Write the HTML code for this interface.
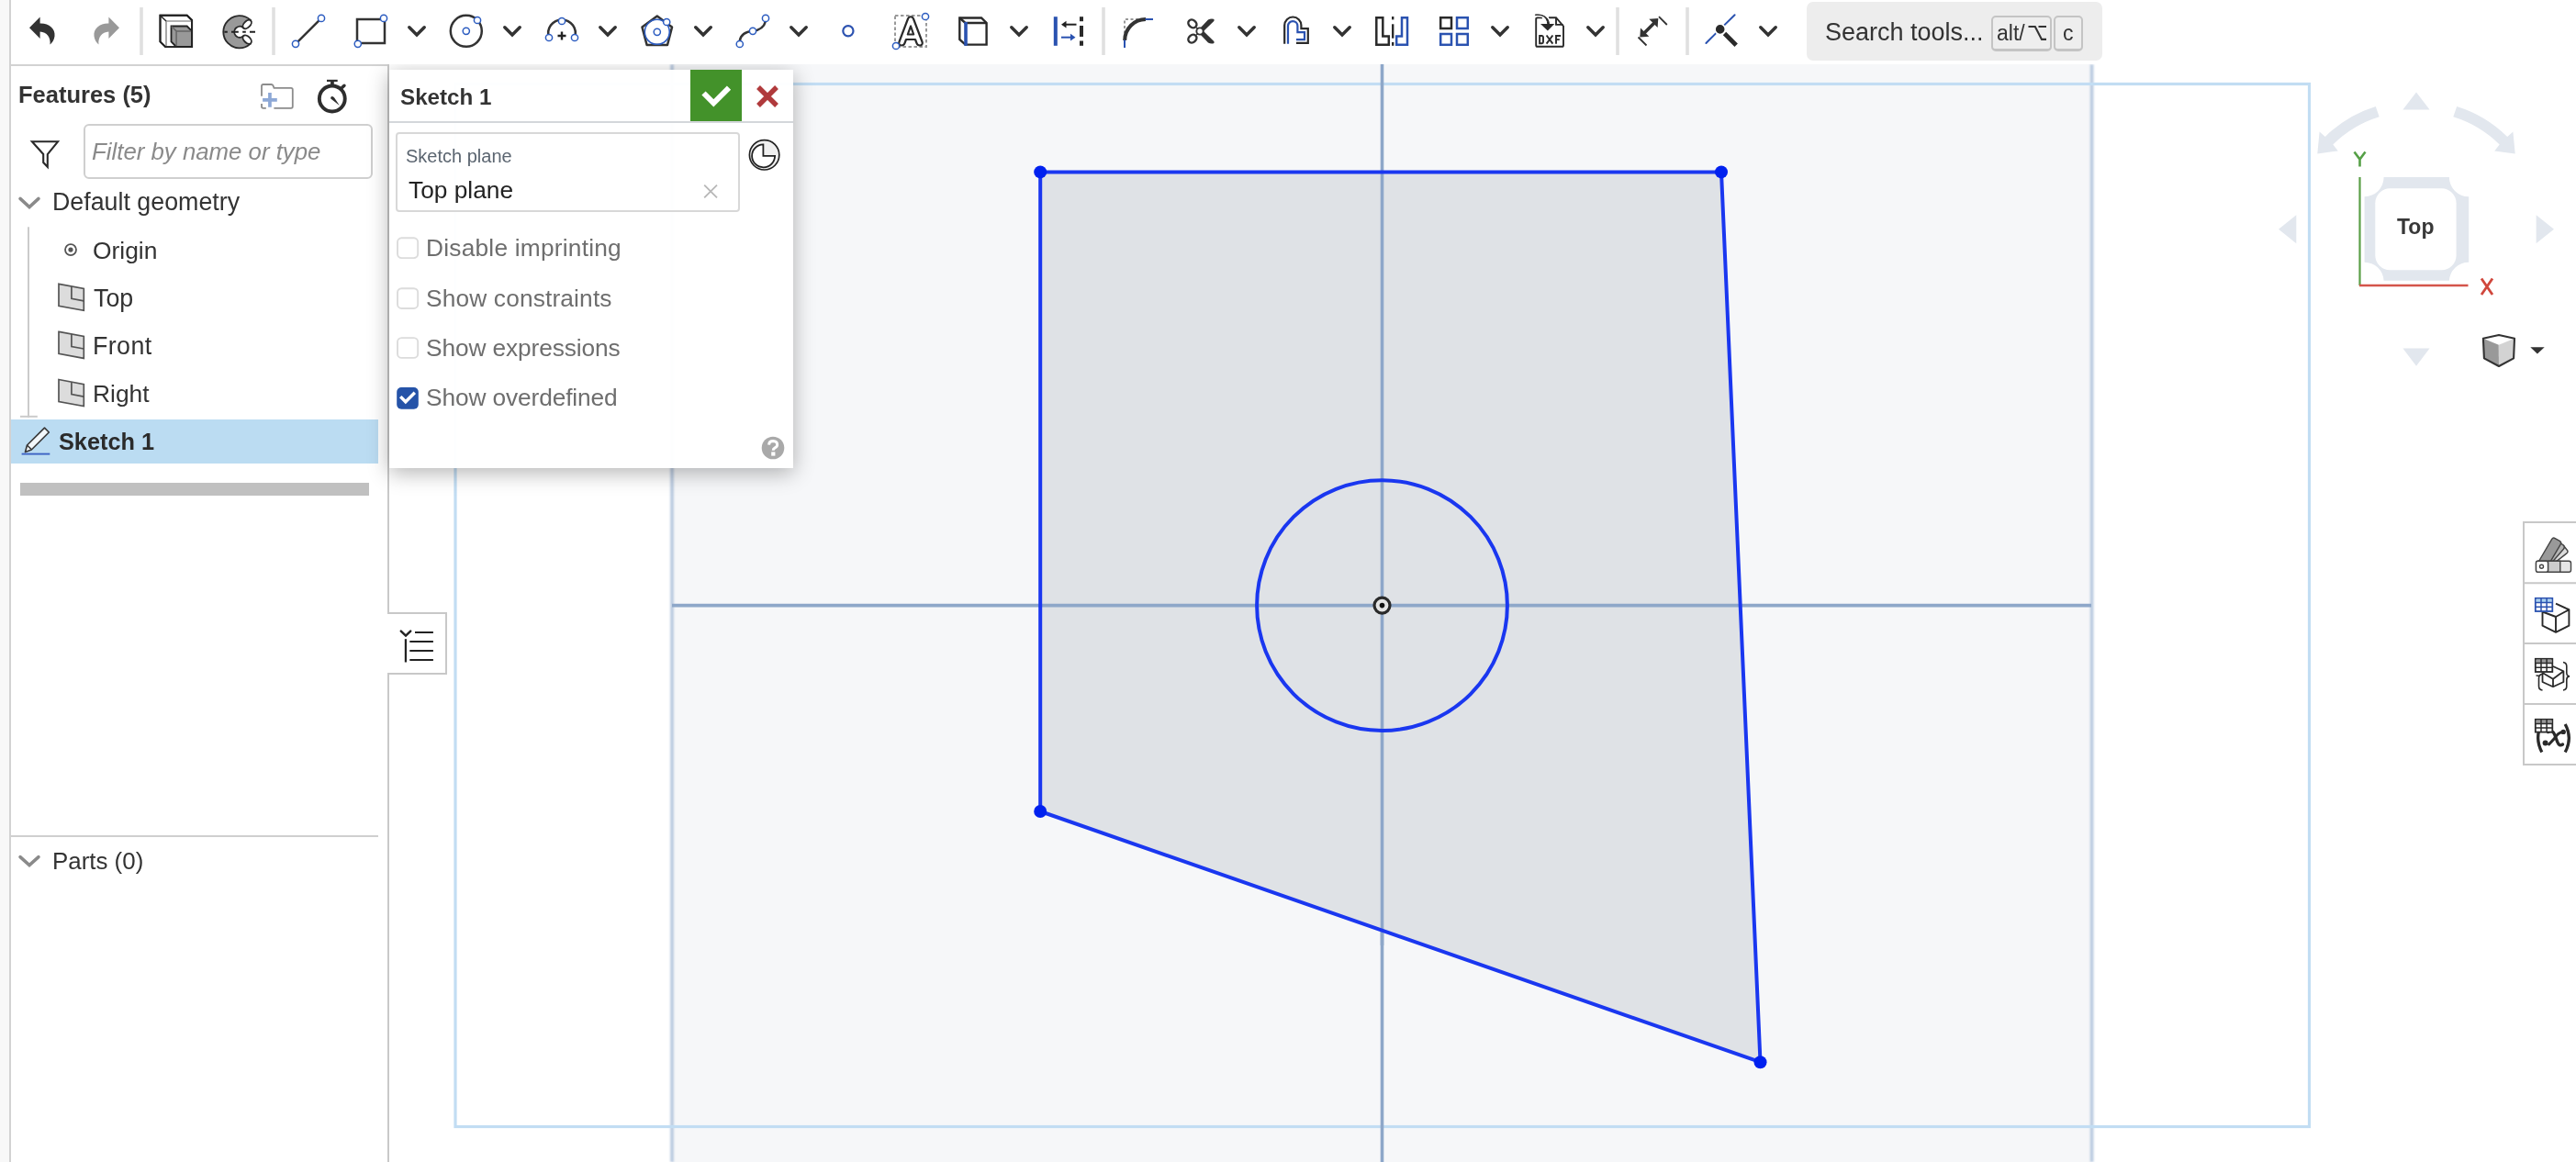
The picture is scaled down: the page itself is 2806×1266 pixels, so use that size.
<!DOCTYPE html>
<html><head><meta charset="utf-8">
<style>
html,body{margin:0;padding:0}
body{width:2806px;height:1266px;overflow:hidden;position:relative;background:#fff;font-family:"Liberation Sans",sans-serif;color:#333}
.a{position:absolute}
.t{position:absolute;line-height:1;white-space:nowrap;will-change:transform}
svg{position:absolute;overflow:visible}
</style></head><body>

<!-- VIEWPORT -->
<svg class="a" style="left:0;top:0" width="2806" height="1266" viewBox="0 0 2806 1266">
  <defs><filter id="bl" filterUnits="userSpaceOnUse" x="0" y="0" width="2806" height="1266"><feGaussianBlur stdDeviation="0.8"/></filter><filter id="bl2" filterUnits="userSpaceOnUse" x="0" y="0" width="2806" height="1266"><feGaussianBlur stdDeviation="0.45"/></filter></defs>
  <rect x="732" y="70" width="1546" height="1196" fill="#f6f7f9"/>
  <line x1="732" y1="70" x2="732" y2="1266" stroke="#b8c9df" stroke-width="3.6" filter="url(#bl)"/>
  <line x1="2278.6" y1="70" x2="2278.6" y2="1266" stroke="#b8c9df" stroke-width="3.6" filter="url(#bl)"/>
  <rect x="496" y="91.5" width="2019.5" height="1136" fill="none" stroke="#c2ddf3" stroke-width="3.2" filter="url(#bl2)"/>
  <line x1="1505.5" y1="70" x2="1505.5" y2="1266" stroke="#8ea7c9" stroke-width="3.6" filter="url(#bl2)"/>
  <line x1="732" y1="659.6" x2="2278" y2="659.6" stroke="#8ea7c9" stroke-width="3.6" filter="url(#bl2)"/>
  <polygon points="1133.2,187.4 1875,187.4 1917.5,1157.2 1133.2,884" fill="#dfe2e6" stroke="none"/>
  <line x1="1505.5" y1="187" x2="1505.5" y2="1030" stroke="#8ea7c9" stroke-width="3.6" filter="url(#bl2)"/>
  <line x1="1133" y1="659.6" x2="1895" y2="659.6" stroke="#8ea7c9" stroke-width="3.6" filter="url(#bl2)"/>
  <polygon points="1133.2,187.4 1875,187.4 1917.5,1157.2 1133.2,884" fill="none" stroke="#1a37f0" stroke-width="4"/>
  <circle cx="1505.5" cy="659.6" r="136.4" fill="none" stroke="#1a37f0" stroke-width="4"/>
  <g fill="#0021ef">
    <circle cx="1133.2" cy="187.4" r="7"/><circle cx="1875" cy="187.4" r="7"/>
    <circle cx="1917.5" cy="1157.2" r="7"/><circle cx="1133.2" cy="884" r="7"/>
  </g>
  <circle cx="1505.5" cy="659.6" r="8.5" fill="#e4e4e4" stroke="#2a2a2a" stroke-width="3.2"/>
  <circle cx="1505.5" cy="659.6" r="2.8" fill="#111"/>
</svg>

<!-- left strip -->
<div class="a" style="left:0;top:0;width:10px;height:1266px;background:#f8f8f8"></div>
<div class="a" style="left:10px;top:0;width:2px;height:1266px;background:#d2d2d2"></div>

<!-- FEATURES PANEL -->
<div class="a" style="left:10px;top:70px;width:414px;height:2px;background:#d2d2d2"></div>
<div class="a" style="left:12px;top:72px;width:410px;height:1194px;background:#fff"></div>
<div class="a" style="left:422px;top:70px;width:2px;height:1196px;background:#c9c9c9"></div>
<div id="panel"></div>
<!-- panel icons -->
<svg class="a" style="left:0;top:0" width="430" height="1266">
 <!-- folder plus -->
 <path d="M285,104.7 V93.8 Q285,92 286.8,92 H295.5 Q296.8,92 297.5,93.3 L298.5,95.9 H317 Q318.8,95.9 318.8,97.7 V116.1 Q318.8,117.9 317,117.9 H298.4 M289.8,117.9 H286.8 Q285,117.9 285,116.1 V113.1" fill="none" stroke="#8c8c8c" stroke-width="1.8"/>
 <path d="M293.95,101.1 V116.8 M286.1,108.95 H301.8" stroke="#8da8d6" stroke-width="3.7"/>
 <!-- stopwatch -->
 <circle cx="361.8" cy="107.5" r="13.95" fill="none" stroke="#2e2e2e" stroke-width="3.9"/>
 <path d="M356,87.9 H367.7" stroke="#2e2e2e" stroke-width="2.2"/>
 <rect x="360.1" y="88.5" width="3.7" height="5" fill="#2e2e2e"/>
 <path d="M372.5,95.6 L375,93.2" stroke="#2e2e2e" stroke-width="3.4" stroke-linecap="round"/>
 <path d="M360.3,107.6 Q359.8,105 361.9,104.9 Q363.2,105 364.2,106.6 L369.9,115 Z" fill="#2e2e2e"/>
 <!-- funnel -->
 <path d="M34.9,154.3 H63 L51.8,168 V181.8 L47.2,177 V168 Z" fill="none" stroke="#2a2a2a" stroke-width="2.1" stroke-linejoin="miter"/>
 <!-- default geometry chevron -->
 <polyline points="22,216.4 32,225.6 42,216.4" fill="none" stroke="#8a8a8a" stroke-width="3.5" stroke-linecap="round"/>
 <!-- tree line -->
 <rect x="30" y="247.3" width="2" height="207.5" fill="#cbcbcb"/>
 <rect x="22" y="452.8" width="18.8" height="2" fill="#cbcbcb"/>
 <!-- origin -->
 <circle cx="77" cy="272.1" r="6" fill="none" stroke="#555" stroke-width="1.8"/>
 <circle cx="77" cy="272.1" r="2.6" fill="#555"/>
 <!-- planes -->
 <g id="plane"><path d="M64,309.3 L91.3,314.4 V338.3 L64,333.3 Z" fill="#dcdcdc" stroke="#555" stroke-width="1.7"/><path d="M77.9,312 V325.4 L91.3,327.9" fill="none" stroke="#555" stroke-width="1.7"/></g>
 <use href="#plane" x="0" y="52.1"/>
 <use href="#plane" x="0" y="104.2"/>
</svg>
<!-- filter input -->
<div class="a" style="left:90.5px;top:135.2px;width:311.2px;height:55.5px;border:2px solid #cfcfcf;border-radius:6px;background:#fff"></div>
<div class="t" style="left:100px;top:152.8px;font-size:25.8px;font-style:italic;color:#8a8a8a">Filter by name or type</div>
<div class="t" style="left:20px;top:90.8px;font-size:25.5px;font-weight:bold;color:#333">Features (5)</div>
<div class="t" style="left:57.4px;top:207.2px;font-size:26.8px;color:#333">Default geometry</div>
<div class="t" style="left:101.3px;top:259.6px;font-size:26.4px;color:#333">Origin</div>
<div class="t" style="left:102px;top:311.8px;font-size:26.8px;color:#333">Top</div>
<div class="t" style="left:101px;top:363.6px;font-size:26.8px;color:#333;letter-spacing:0.4px">Front</div>
<div class="t" style="left:101px;top:415.9px;font-size:26.4px;color:#333">Right</div>
<!-- sketch 1 row -->
<div class="a" style="left:12px;top:457px;width:400px;height:47.7px;background:#bbdcf2"></div>
<svg class="a" style="left:0;top:0" width="430" height="520">
 <path d="M27.5,492.5 L29.5,485 L48.5,466.2 L53.3,471 L34.3,490 Z" fill="#f4f8fb" stroke="#3a3a3a" stroke-width="1.7" stroke-linejoin="round"/>
 <path d="M29.8,485.2 L34.2,489.6" stroke="#3a3a3a" stroke-width="1.5"/>
 <path d="M23.6,494.6 H54.3" stroke="#3d63c4" stroke-width="1.9"/>
</svg>
<div class="t" style="left:64.2px;top:468.5px;font-size:25.3px;font-weight:bold;color:#2b2b2b">Sketch 1</div>
<!-- progress bar -->
<div class="a" style="left:22px;top:526px;width:380px;height:13.7px;background:#c0c0c0"></div>
<!-- parts -->
<div class="a" style="left:12px;top:909.7px;width:400px;height:2px;background:#cfcfcf"></div>
<svg class="a" style="left:0;top:0" width="100" height="960"><polyline points="22,933.6 32,942.6 42,933.6" fill="none" stroke="#8a8a8a" stroke-width="3.5" stroke-linecap="round"/></svg>
<div class="t" style="left:56.6px;top:925.5px;font-size:25.9px;color:#333">Parts (0)</div>


<!-- DIALOG -->
<div id="dialog"></div>
<!-- dialog -->
<div class="a" style="left:424px;top:76px;width:440px;height:434px;background:rgba(255,255,255,0.965);box-shadow:0 5px 22px rgba(0,0,0,0.30)"></div>
<div class="a" style="left:424px;top:132px;width:440px;height:2px;background:#d4d7db"></div>
<div class="a" style="left:752px;top:76px;width:56px;height:56px;background:#43922a"></div>
<svg class="a" style="left:0;top:0" width="900" height="520">
 <path d="M766.5,101.5 L777.3,112.3 L794,95.6" fill="none" stroke="#fff" stroke-width="6"/>
 <path d="M826,95 L846,115 M846,95 L826,115" stroke="#b03a3c" stroke-width="5.4"/>
 <!-- history icon -->
 <circle cx="832.6" cy="168.8" r="16.2" fill="#f0f0f0" stroke="#222" stroke-width="1.7"/>
 <path d="M831.4,157.2 V169.8 H844" fill="#f0f0f0" stroke="none"/>
 <path d="M831.4,157.3 A12.5,12.5 0 1 0 844.1,169.8 H831.4 Z" fill="#fff" stroke="#222" stroke-width="1.8" stroke-linejoin="miter"/>
 <!-- clear x -->
 <path d="M767.2,201.6 L781,215.4 M781,201.6 L767.2,215.4" stroke="#b8b8b8" stroke-width="1.9"/>
 <!-- checkboxes -->
 <g fill="#fff" stroke="#dcdcdc" stroke-width="1.9">
  <rect x="433" y="259.3" width="22.2" height="21.8" rx="4.5"/>
  <rect x="433" y="314.2" width="22.2" height="21.8" rx="4.5"/>
  <rect x="433" y="368.1" width="22.2" height="21.8" rx="4.5"/>
 </g>
 <rect x="432.2" y="422.1" width="23.6" height="23.7" rx="5" fill="#2553a8"/>
 <path d="M437.4,433.3 L441.8,437.8 L450.6,429" fill="none" stroke="#fff" stroke-width="3.4" stroke-linecap="square"/>
 <!-- help -->
 <circle cx="842" cy="488" r="12.3" fill="#a9a9a9"/>
 <path d="M837.6,484.6 Q837.8,480.6 842.2,480.6 Q846.6,480.8 846.6,484.4 Q846.6,486.6 844.2,487.8 Q842.2,488.8 842.2,490.8" fill="none" stroke="#fff" stroke-width="3"/>
 <rect x="840.2" y="492.4" width="4.2" height="4.2" fill="#fff"/>
</svg>
<div class="t" style="left:435.5px;top:93.7px;font-size:24.2px;font-weight:bold;color:#333">Sketch 1</div>
<div class="a" style="left:430.6px;top:144px;width:371.2px;height:83.4px;border:2px solid #d8d8d8;border-radius:4px"></div>
<div class="t" style="left:441.5px;top:159.5px;font-size:20px;color:#5b6570">Sketch plane</div>
<div class="t" style="left:444.5px;top:193.7px;font-size:26.3px;color:#222">Top plane</div>
<div class="t" style="left:463.5px;top:257.2px;font-size:26.3px;color:#6e6e6e;letter-spacing:0.22px">Disable imprinting</div>
<div class="t" style="left:463.5px;top:312.4px;font-size:26.3px;color:#6e6e6e;letter-spacing:0.15px">Show constraints</div>
<div class="t" style="left:463.5px;top:365.8px;font-size:26.3px;color:#6e6e6e;letter-spacing:-0.12px">Show expressions</div>
<div class="t" style="left:463.5px;top:420.2px;font-size:26.3px;color:#6e6e6e;letter-spacing:-0.12px">Show overdefined</div>
<!-- tab -->
<div class="a" style="left:422px;top:667px;width:63px;height:63.8px;background:#fff;border:2px solid #c8c8c8;border-left:none"></div>
<svg class="a" style="left:0;top:0" width="500" height="740">
 <polyline points="436.8,687.6 442,692.6 447.2,687.6" fill="none" stroke="#222" stroke-width="2.5" stroke-linecap="round"/>
 <path d="M452,689 H471.9 M446.3,699 H471.9 M446.3,709 H471.9 M446.3,719 H471.9" stroke="#222" stroke-width="2.2"/>
 <path d="M441.9,696.2 V721.5" stroke="#222" stroke-width="2.2"/>
</svg>


<!-- NAV CUBE -->
<div id="nav"></div>
<!-- nav cube -->
<svg class="a" style="left:0;top:0" width="2806" height="860">
 <g fill="#e2e7ee">
  <polygon points="2632,100.6 2646.6,119.6 2617.4,119.6"/>
  <polygon points="2632,398.8 2646.6,379.4 2617.4,379.4"/>
  <polygon points="2482,249.7 2501.3,234.2 2501.3,265.2"/>
  <polygon points="2782,249.7 2762.6,234.2 2762.6,265.2"/>
  <path d="M2587.8,115.9 A135.5,135.5 0 0 0 2532.8,148.9 L2526.6,143.4 L2524.3,167.5 L2546.8,164.4 L2541.3,157.4 A124.5,124.5 0 0 1 2591.7,127.2 Z"/>
  <path d="M2676.2,115.9 A135.5,135.5 0 0 1 2731.2,148.9 L2737.4,143.4 L2739.7,167.5 L2717.2,164.4 L2722.7,157.4 A124.5,124.5 0 0 0 2672.3,127.2 Z"/>
  <path d="M2596.6,192.9 H2667.9 A21,21 0 0 0 2689.2,214.2 V285.8 A21,21 0 0 0 2667.9,305.8 H2596.6 A21,21 0 0 0 2575.6,285.8 V214.2 A21,21 0 0 0 2596.6,192.9 Z"/>
 </g>
 <rect x="2587.3" y="205.2" width="88.3" height="89" rx="16" fill="#fff"/>
 <path d="M2570.5,193 V311" stroke="#5a9f47" stroke-width="2.2"/>
 <path d="M2570,311 H2688.5" stroke="#d4554b" stroke-width="2.6"/>
 <path d="M2564.5,165.5 L2570.5,173.5 L2576.5,165.5 M2570.5,173.5 V181.5" fill="none" stroke="#55a046" stroke-width="2.6"/>
 <path d="M2703,303.5 L2715,321 M2715,303.5 L2703,321" fill="none" stroke="#d0473c" stroke-width="2.8"/>
 <!-- small cube -->
 <path d="M2722,364.9 L2739,368.7 L2721.8,375.8 L2704.9,368.7 Z" fill="#fff"/>
 <path d="M2704.9,368.7 L2721.8,375.8 L2722,399 L2705.9,390.3 Z" fill="#999"/>
 <path d="M2739,368.7 L2721.8,375.8 L2722,399 L2738.1,390.3 Z" fill="#d3d3d3"/>
 <path d="M2722,364.9 L2739,368.7 L2738.1,390.3 L2722,399 L2705.9,390.3 L2704.9,368.7 Z" fill="none" stroke="#333" stroke-width="2.1" stroke-linejoin="round"/>
 <polygon points="2756.3,378.2 2771.7,378.2 2763.9,385.5" fill="#333"/>
 <!-- right panel -->
 <rect x="2749" y="569" width="70" height="264" fill="#fff" stroke="#c8c8c8" stroke-width="2"/>
 <path d="M2749,635.2 H2806 M2749,701 H2806 M2749,767 H2806" stroke="#c8c8c8" stroke-width="2"/>
 <!-- palette -->
 <g stroke="#444" stroke-width="1.4" stroke-linejoin="round">
  <rect x="2763" y="584.3" width="11" height="33" rx="2.6" transform="rotate(52 2768.5 617.3)" fill="#dcdcdc"/>
  <rect x="2763" y="584.3" width="11" height="33" rx="2.6" transform="rotate(41 2768.5 617.3)" fill="#b4b4b4"/>
  <rect x="2763" y="583.3" width="11" height="34" rx="2.6" transform="rotate(30.5 2768.5 617.3)" fill="#999"/>
  <rect x="2762.5" y="611.3" width="38" height="12" rx="2.2" fill="#e6e6e6"/>
  <rect x="2775.5" y="611.3" width="13.3" height="12" fill="#cdcdcd"/>
  <rect x="2762.5" y="611.3" width="13" height="12" rx="2" fill="#fff"/>
  <circle cx="2768.5" cy="617.3" r="2" fill="none"/>
 </g>
 <!-- table + cube -->
 <path d="M2784,657.6 L2798.4,664.2 V681.7 L2784,688.9 L2769.5,681.7 V666.5 M2769.5,666.5 L2784,672 L2798.4,664.2 M2784,672 V688.9" fill="none" stroke="#2a2a2a" stroke-width="1.9" stroke-linejoin="round"/>
 <rect x="2761.8" y="651.8" width="18.5" height="14.2" fill="#fff" stroke="#2a52b0" stroke-width="1.8"/>
 <rect x="2762.7" y="652.7" width="16.7" height="3.9" fill="#a8d2f0"/>
 <path d="M2761.8,656.6 H2780.3 M2761.8,661.3 H2780.3 M2768,651.8 V666 M2774.1,651.8 V666" stroke="#2a52b0" stroke-width="1.5"/>
 <!-- braces cube -->
 <path d="M2781,726 L2792.4,731.3 V743 L2781,748.2 L2769.5,743 V733 M2769.5,733 L2781,739.8 L2792.4,731.3 M2781,739.8 V748.2" fill="none" stroke="#2a2a2a" stroke-width="1.8" stroke-linejoin="round"/>
 <rect x="2761.8" y="717.8" width="18.5" height="14.2" fill="#fff" stroke="#2a2a2a" stroke-width="1.8"/>
 <rect x="2762.7" y="718.7" width="16.7" height="3.9" fill="#999"/>
 <path d="M2761.8,722.6 H2780.3 M2761.8,727.3 H2780.3 M2768,717.8 V732 M2774.1,717.8 V732" stroke="#2a2a2a" stroke-width="1.5"/>
 <path d="M2769,734.5 Q2765.5,735 2765.5,739 V747.5 Q2765.5,751.5 2769.5,752 M2765.5,736.5 Q2765,736 2762.5,736" fill="none" stroke="#2a2a2a" stroke-width="1.6"/>
 <path d="M2792,721.5 Q2795.8,722 2795.8,726 V733 Q2795.8,736.5 2799,736.8 Q2795.8,737.2 2795.8,740.5 V747.5 Q2795.8,751.5 2792,752" fill="none" stroke="#2a2a2a" stroke-width="1.6"/>
 <!-- fx -->
 <path d="M2768.8,788 Q2760.5,803.5 2768.8,819.5" fill="none" stroke="#2a2a2a" stroke-width="3.3"/>
 <path d="M2794.2,789 Q2802.5,804 2794.2,819.5" fill="none" stroke="#2a2a2a" stroke-width="3.3"/>
 <path d="M2775.5,797.5 Q2780.5,794.5 2782.8,800.5 L2785.8,808.5 Q2787.8,813.5 2791.5,811" fill="none" stroke="#2a2a2a" stroke-width="3.4" stroke-linecap="round"/>
 <path d="M2791.5,797.5 Q2786.5,798 2782.5,804.5 L2776.5,811" fill="none" stroke="#2a2a2a" stroke-width="3" stroke-linecap="round"/>
 <circle cx="2792.2" cy="797.4" r="2.7" fill="#2a2a2a"/>
 <circle cx="2772.6" cy="809.6" r="3" fill="#2a2a2a"/>
<rect x="2761.8" y="783.8" width="18.5" height="13.8" fill="#fff" stroke="#2a2a2a" stroke-width="1.8"/>
 <rect x="2762.7" y="784.7" width="16.7" height="3.8" fill="#999"/>
 <path d="M2761.8,788.6 H2780.3 M2761.8,793.1 H2780.3 M2768,783.8 V797.6 M2774.1,783.8 V797.6" stroke="#2a2a2a" stroke-width="1.5"/>
 </svg>
<div class="t" style="left:2611px;top:236.2px;font-size:23px;font-weight:bold;color:#383838">Top</div>


<!-- TOOLBAR -->
<div class="a" style="left:12px;top:0;width:2794px;height:70px;background:#fff"></div>
<div id="toolbar"></div>
<svg class="a" style="left:0;top:0" width="2806" height="70" viewBox="0 0 2806 70">
 <defs>
  <g id="chev"><polyline points="-8.2,-4.2 0,4 8.2,-4.2" fill="none" stroke="#333" stroke-width="3.5" stroke-linecap="round" stroke-linejoin="miter"/></g>
 </defs>
 <!-- undo -->
 <path d="M32,30.2 L43.6,18.4 L43.6,25.6 C53,25.2 60.5,31 59.5,39.5 C59,43.5 57,46.5 54.5,48.6 C55.5,41 51,35 43.6,34.6 L43.6,42 Z" fill="#333"/>
 <!-- redo -->
 <path d="M130,30.2 L118.4,18.4 L118.4,25.6 C109,25.2 101.5,31 102.5,39.5 C103,43.5 105,46.5 107.5,48.6 C106.5,41 111,35 118.4,34.6 L118.4,42 Z" fill="#999"/>
 <rect x="152.2" y="8" width="3.6" height="52" fill="#e0e0e0"/>
 <!-- extrude -->
 <path d="M174.5,16.7 H203.7 L209.1,22 V51.1 H180.3 L174.5,45.3 Z" fill="#fff" stroke="#222" stroke-width="1.9"/>
 <path d="M181,23 H208.5 M181,23 V50.5" fill="none" stroke="#999" stroke-width="1.7"/>
 <path d="M175.5,17.7 L181,23" fill="none" stroke="#222" stroke-width="1.5"/>
 <path d="M186.5,28.5 H203.7 L209,33.8 V51 H192.1 L186.5,45.3 Z" fill="#999" stroke="#222" stroke-width="1.8"/>
 <path d="M186.8,28.8 L192.1,33.9 H208.5 M192.1,33.9 V50.5" fill="none" stroke="#666" stroke-width="1.5"/>
 <path d="M174.5,16.7 H203.7 L209.1,22 V51.1 H180.3 L174.5,45.3 Z" fill="none" stroke="#222" stroke-width="1.9"/>
 <!-- revolve -->
 <path d="M272.6,21.6 A17.6,17.6 0 1 0 272.6,47.9 L264.8,39.6 A6,6 0 1 1 264.8,30 Z" fill="#999" stroke="#2a2a2a" stroke-width="1.9"/>
 <ellipse cx="269.2" cy="26.5" rx="5.7" ry="3.4" transform="rotate(-45 269.2 26.5)" fill="#fff" stroke="#2a2a2a" stroke-width="1.9"/>
 <ellipse cx="269.2" cy="43.1" rx="5.7" ry="3.4" transform="rotate(45 269.2 43.1)" fill="#fff" stroke="#2a2a2a" stroke-width="1.9"/>
 <path d="M244.4,34.8 H247.8 M252,34.8 H259.8 M264.2,34.8 H267.8 M272,34.8 H278" stroke="#222" stroke-width="1.9"/>
 <rect x="296.2" y="8" width="3.6" height="52" fill="#e0e0e0"/>
 <!-- line -->
 <line x1="322" y1="47.8" x2="350" y2="19.9" stroke="#333" stroke-width="2.5"/>
 <g fill="#fff" stroke="#2c5cc0" stroke-width="1.5">
  <circle cx="322" cy="47.8" r="3.6"/><circle cx="350" cy="19.9" r="3.6"/>
 </g>
 <!-- rect -->
 <rect x="389" y="21" width="30" height="26" fill="none" stroke="#333" stroke-width="2.5"/>
 <g fill="#fff" stroke="#2c5cc0" stroke-width="1.5">
  <circle cx="389.8" cy="47.8" r="3.6"/><circle cx="418" cy="19.9" r="3.6"/>
 </g>
 <use href="#chev" x="454" y="34"/>
 <!-- circle -->
 <circle cx="507.8" cy="33.8" r="17" fill="none" stroke="#333" stroke-width="2.5"/>
 <g fill="#fff" stroke="#2c5cc0" stroke-width="1.5">
  <circle cx="507.8" cy="33.8" r="3.6"/><circle cx="520" cy="22" r="3.6"/>
 </g>
 <use href="#chev" x="558" y="34"/>
 <!-- arc -->
 <path d="M598,41 A14.8,14.8 0 1 1 626,41" fill="none" stroke="#333" stroke-width="2.5"/>
 <path d="M612,34.5 V43.5 M607.5,39 H616.5" stroke="#222" stroke-width="2.4"/>
 <g fill="#fff" stroke="#2c5cc0" stroke-width="1.5">
  <circle cx="598" cy="41" r="3.6"/><circle cx="612" cy="23" r="3.6"/><circle cx="626" cy="41" r="3.6"/>
 </g>
 <use href="#chev" x="662" y="34"/>
 <!-- polygon -->
 <polygon points="715.8,17.5 732,29.6 727,49 704.6,49 699.5,29.6" fill="none" stroke="#333" stroke-width="2.5" stroke-linejoin="round"/>
 <circle cx="715.8" cy="34.8" r="13.5" fill="none" stroke="#2c5cc0" stroke-width="1.6"/>
 <g fill="#fff" stroke="#2c5cc0" stroke-width="1.5">
  <circle cx="715.8" cy="34.8" r="3.6"/><circle cx="726.2" cy="24" r="3.6"/>
 </g>
 <use href="#chev" x="766" y="34"/>
 <!-- spline -->
 <path d="M805.8,44.5 C807,37 813,34.5 820,33.8 C827,33 832.5,29 834,23" fill="none" stroke="#333" stroke-width="2.5"/>
 <g fill="#fff" stroke="#2c5cc0" stroke-width="1.5">
  <circle cx="805.8" cy="48" r="3.6"/><circle cx="820" cy="33.8" r="3.6"/><circle cx="834" cy="19.9" r="3.6"/>
 </g>
 <use href="#chev" x="870" y="34"/>
 <!-- point -->
 <circle cx="923.9" cy="33.8" r="5.6" fill="none" stroke="#2c52b0" stroke-width="2.2"/>
 <!-- text -->
 <rect x="975" y="17" width="34" height="34" fill="none" stroke="#999" stroke-width="2" stroke-dasharray="3.5,2.5"/>
 <path d="M982,49.5 C980,49.5 978.5,48 979.5,45.5 L989,20.5 C990,17.5 994,17.5 995,20.5 L1004.5,45.5 C1005.5,48 1004,49.5 1002,49.5 C1000,49.5 999,48.5 998.5,47 L997,43 H987 L985.5,47 C985,48.5 984,49.5 982,49.5 Z M988.8,37.5 H995.2 L992,28.5 Z" fill="#fff" stroke="#2a2a2a" stroke-width="2.2" stroke-linejoin="round"/>
 <g fill="#fff" stroke="#2c5cc0" stroke-width="1.5">
  <circle cx="976" cy="50" r="3.6"/><circle cx="1008" cy="18" r="3.6"/>
 </g>
 <!-- cube blue edge -->
 <path d="M1045.3,19.5 H1069 L1074.6,25 V48.6 H1051.5 L1045.3,43 Z" fill="none" stroke="#2a2a2a" stroke-width="2.4"/>
 <path d="M1045.3,19.5 L1051.5,25 H1074.6" fill="none" stroke="#2a2a2a" stroke-width="2.4"/>
 <line x1="1052" y1="24" x2="1052" y2="49.8" stroke="#2a52b0" stroke-width="3.6"/>
 <use href="#chev" x="1110" y="34"/>
 <!-- dimension -->
 <rect x="1147.8" y="18.2" width="4" height="31.6" fill="#2a52b0"/>
 <path d="M1172.5,26.7 H1160" stroke="#222" stroke-width="2"/>
 <path d="M1156,26.7 L1161.5,22.8 V30.6 Z" fill="#222"/>
 <path d="M1156,40.7 H1167" stroke="#2a52b0" stroke-width="2"/>
 <path d="M1171.5,40.7 L1166,36.8 V44.6 Z" fill="#2a52b0"/>
 <g fill="#2a2a2a"><rect x="1176" y="18.2" width="4" height="5"/><rect x="1176" y="28" width="4" height="12"/><rect x="1176" y="44.5" width="4" height="5.3"/></g>
 <rect x="1200.2" y="8" width="3.6" height="52" fill="#e0e0e0"/>
 <!-- fillet -->
 <path d="M1225,42 V21 H1247" fill="none" stroke="#999" stroke-width="2" stroke-dasharray="3,2.5"/>
 <path d="M1225.2,44 A22.8,23 0 0 1 1248,21" fill="none" stroke="#333" stroke-width="4"/>
 <path d="M1225,43.5 V52 M1247.5,21 H1256" stroke="#2a52b0" stroke-width="2"/>
 <!-- scissors -->
 <g fill="none" stroke="#333" stroke-width="2.5">
  <ellipse cx="1298.9" cy="25.9" rx="4.9" ry="3.9" transform="rotate(40 1298.9 25.9)"/>
  <ellipse cx="1298.9" cy="42.1" rx="4.9" ry="3.9" transform="rotate(-40 1298.9 42.1)"/>
 </g>
 <path d="M1302.5,29.5 L1307,31 L1316,21.6 Q1319,19.8 1322,20.8 Q1323.3,21.6 1322.3,22.9 L1311,34 L1322.3,45.1 Q1323.3,46.4 1322,47.2 Q1319,48.2 1316,46.4 L1307,37 L1302.5,38.5 L1305,34 Z" fill="#333"/>
 <circle cx="1307" cy="34" r="4.6" fill="#333"/>
 <circle cx="1307" cy="34" r="2.7" fill="#fff"/>
 <use href="#chev" x="1358" y="34"/>
 <!-- offset -->
 <path d="M1399.2,47.8 V27.6 A9.1,9.1 0 0 1 1417.4,27.6 V31.2 H1424.8 V46.8 H1412" fill="none" stroke="#2a2a2a" stroke-width="2.2"/>
 <path d="M1403,47.8 V28.3 A5.2,5.2 0 0 1 1413.4,28.3 V35.2 H1421 V43.2 H1412" fill="none" stroke="#2a52b0" stroke-width="2.2"/>
 <use href="#chev" x="1462" y="34"/>
 <!-- mirror -->
 <path d="M1499.3,19.2 H1506.3 V39.4 H1512.8 V48.8 H1499.3 Z" fill="none" stroke="#2a2a2a" stroke-width="2.5"/>
 <g fill="#2a2a2a"><rect x="1516" y="18" width="2.4" height="3.4"/><rect x="1516" y="26.3" width="2.4" height="15.4"/><rect x="1516" y="46" width="2.4" height="3.8"/></g>
 <path d="M1533,19.2 H1527 V39.4 H1521.2 V48.8 H1533 Z" fill="none" stroke="#2a52b0" stroke-width="2.5"/>
 <!-- pattern -->
 <rect x="1569.2" y="19.2" width="11.8" height="11.8" fill="none" stroke="#2a2a2a" stroke-width="2.5"/>
 <g fill="none" stroke="#2a52b0" stroke-width="2.5">
  <rect x="1587" y="19.2" width="11.8" height="11.8"/><rect x="1569.2" y="37" width="11.8" height="11.8"/><rect x="1587" y="37" width="11.8" height="11.8"/>
 </g>
 <use href="#chev" x="1634" y="34"/>
 <!-- dxf -->
 <path d="M1680,19.2 H1674.8 Q1673.2,19.2 1673.2,20.8 V49.2 Q1673.2,50.8 1674.8,50.8 H1701.4 Q1703,50.8 1703,49.2 V28.5 L1695,19.2 H1687" fill="none" stroke="#2a2a2a" stroke-width="1.9"/>
 <path d="M1695,19.6 V26.9 H1702.6" fill="none" stroke="#2a2a2a" stroke-width="1.9"/>
 <path d="M1672.3,16.2 C1680,15.6 1686.5,17.5 1686.6,26.5" fill="none" stroke="#fff" stroke-width="4.5"/>
 <path d="M1672.3,16.3 C1679,15.8 1685.2,17.5 1685.9,26.5 L1687.4,26.5 C1687.5,19 1681,15.3 1672.3,16 Z" fill="#2a2a2a" stroke="#2a2a2a" stroke-width="1"/>
 <path d="M1678,26.1 H1693.3 L1685.9,33.6 Z" fill="#2a2a2a"/>
 <g fill="none" stroke="#2a2a2a" stroke-width="1.9">
  <path d="M1677.1,39 H1679.6 Q1681,39 1681,40.6 V45.8 Q1681,47.3 1679.6,47.3 H1677.1 Z"/>
  <path d="M1684.6,38.5 L1691.4,47.6 M1691.4,38.5 L1684.6,47.6"/>
  <path d="M1695,47.8 V39 H1700.2 M1695,43.1 H1698.8"/>
 </g>
 <use href="#chev" x="1738" y="34"/>
 <rect x="1760.2" y="8" width="3.6" height="52" fill="#e0e0e0"/>
 <!-- transform -->
 <path d="M1790.5,36.5 L1802.5,24.5" stroke="#333" stroke-width="3.6"/>
 <path d="M1806.3,20 L1805.6,30 L1796.3,20.7 Z" fill="#333"/>
 <path d="M1786.3,40.5 L1787,30.5 L1796.3,39.8 Z" fill="#333"/>
 <path d="M1807,18.2 L1815.8,27 M1784.5,40.5 L1793.5,49.5" stroke="#333" stroke-width="1.8"/>
 <rect x="1836.2" y="8" width="3.6" height="52" fill="#e0e0e0"/>
 <!-- construction -->
 <path d="M1858.4,47 L1869.5,35.9 M1878,27.6 L1889.6,16.2" stroke="#2a52b0" stroke-width="2" stroke-linecap="round"/>
 <circle cx="1873.7" cy="31.9" r="5.6" fill="#2a2a2a" stroke="#fff" stroke-width="1.6"/>
 <path d="M1878.5,36.5 L1891.2,49.2" stroke="#2a2a2a" stroke-width="4.8"/>
 <use href="#chev" x="1926" y="34"/>
</svg>
<!-- search box -->
<div class="a" style="left:1968px;top:2px;width:322px;height:64px;background:#ededed;border-radius:7px"></div>
<div class="t" style="left:1988px;top:21.6px;font-size:27px;color:#333">Search tools...</div>
<div class="a" style="left:2169px;top:17px;width:62px;height:34.4px;border:2px solid #c4c4c4;border-bottom-width:3.4px;border-radius:5px;background:#eee"></div>
<div class="t" style="left:2175px;top:24.6px;font-size:23px;color:#333">alt/</div>
<svg class="a" style="left:0;top:0" width="2806" height="70"><path d="M2209.5,29 H2216.8 L2224,42.9 H2229 M2220.5,29 H2229" fill="none" stroke="#333" stroke-width="2.1"/></svg>
<div class="a" style="left:2236.5px;top:17px;width:28.7px;height:34.4px;border:2px solid #c4c4c4;border-bottom-width:3.4px;border-radius:5px;background:#eee"></div>
<div class="t" style="left:2246.5px;top:24.6px;font-size:23px;color:#333">c</div>


</body></html>
